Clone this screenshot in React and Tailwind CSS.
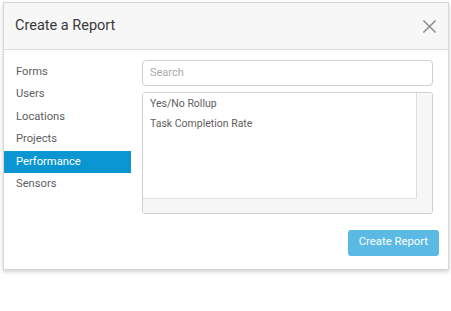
import React from 'react';

const sections = ['Forms', 'Users', 'Locations', 'Projects', 'Performance', 'Sensors'];
const reports = ['Yes/No Rollup', 'Task Completion Rate'];

const App = () => {
  const active = 'Performance';

  return (
    <div className="min-h-[311px] bg-white pt-[2px] pl-[3px]" style={{ fontFamily: 'Roboto, "Liberation Sans", sans-serif' }}>
      <div className="w-[446px] bg-white border border-[#d6d6d6] shadow-[0_2px_4px_rgba(0,0,0,0.18)]">
        {/* Header */}
        <div className="h-[47px] bg-[#f7f7f7] border-b border-[#dcdcdc] flex items-center justify-between pl-[11px] pr-[10px]">
          <span className="text-[14.5px] text-[#3a3a3a]">Create a Report</span>
          <button className="w-[18px] h-[18px] flex items-center justify-center text-[#888]">
            <svg width="15" height="15" viewBox="0 0 16 16" fill="none" stroke="currentColor" strokeWidth="1.5">
              <path d="M1.5 1.5 L14.5 14.5 M14.5 1.5 L1.5 14.5" />
            </svg>
          </button>
        </div>

        {/* Body */}
        <div className="flex">
          <ul className="w-[127px] pt-[11px]">
            {sections.map((s) => (
              <li
                key={s}
                className={`h-[22.4px] leading-[22px] pl-[12px] text-[11.2px] ${s === active ? 'bg-[#0a96d2] text-white' : 'text-[#5e5e5e]'}`}
              >
                {s}
              </li>
            ))}
          </ul>

          <div className="flex-1 ml-[11px] mr-[15px] pt-[9px]">
            <input
              placeholder="Search"
              className="w-full h-[26px] rounded-[4px] border border-[#cfcfcf] px-[7px] text-[11px] text-[#555] placeholder:text-[#aaa] outline-none"
            />
            <div className="mt-[6px] h-[122px] rounded-[3px] border border-[#cfcfcf] flex flex-col overflow-hidden">
              <div className="flex-1 flex">
                <div className="flex-1 bg-white border-r border-b border-[#dedede] pt-[1px]">
                  {reports.map((r) => (
                    <div key={r} className="h-[20px] leading-[20px] pl-[7px] text-[10.5px] text-[#5e5e5e]">
                      {r}
                    </div>
                  ))}
                </div>
                <div className="w-[15px] bg-[#f7f7f7]" />
              </div>
              <div className="h-[14px] bg-[#f7f7f7]" />
            </div>
          </div>
        </div>

        {/* Footer */}
        <div className="flex justify-end pt-[16px] pb-[13px] pr-[9px]">
          <button className="h-[26px] px-[11px] rounded-[3px] bg-[#5bbae3] text-white text-[11.3px]">
            Create Report
          </button>
        </div>
      </div>
    </div>
  );
};

export default App;
